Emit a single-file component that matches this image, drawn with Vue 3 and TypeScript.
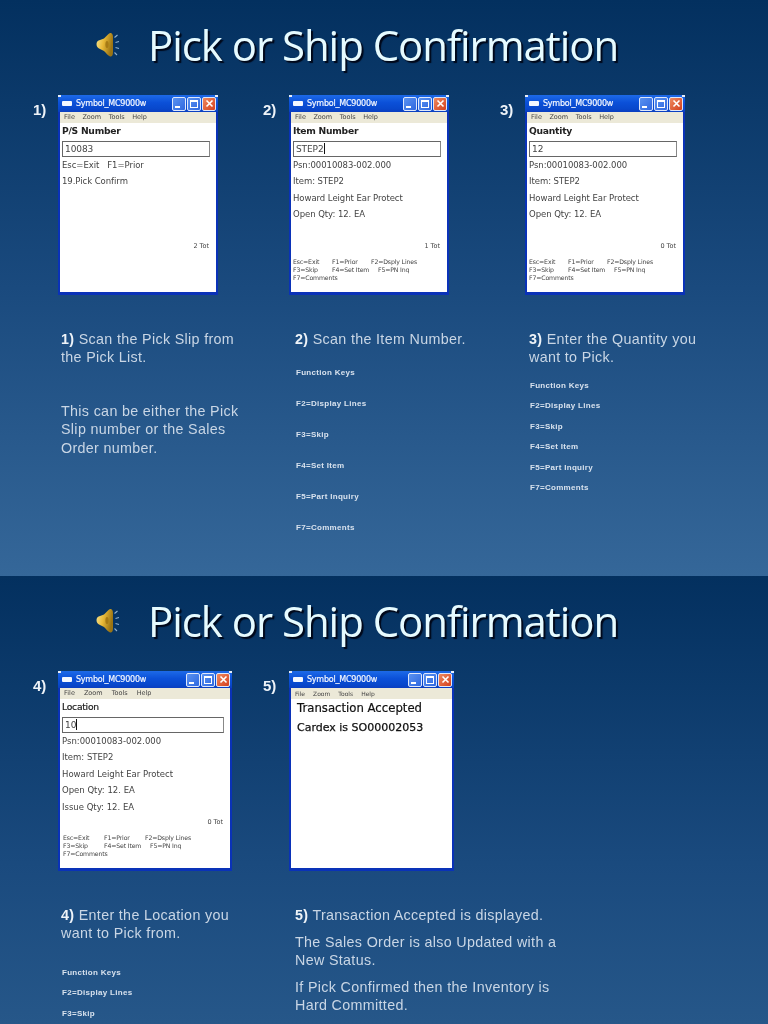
<script setup lang="ts">
interface Win {
  cls: string
  heading: string
  input: string
  cursor?: boolean
  lines: string[]
  tot: string
  foot?: boolean
}
interface Note {
  num: string
  first: string
  paras: string[]
  keys?: string[]
  keysCls?: string
}
interface Col {
  label: string
  win: Win
  note: Note
}
const allKeys = ['Function Keys', 'F2=Display Lines', 'F3=Skip', 'F4=Set Item', 'F5=Part Inquiry', 'F7=Comments']
const det = ['Psn:00010083-002.000', 'Item: STEP2', 'Howard Leight Ear Protect', 'Open Qty: 12. EA']
const slides: { cols: Col[] }[] = [
  {
    cols: [
      {
        label: '1)',
        win: { cls: 'w160', heading: 'P/S Number', input: '10083', lines: ['Esc=Exit   F1=Prior', '19.Pick Confirm'], tot: '2 Tot' },
        note: { num: '1)', first: ' Scan the Pick Slip from the Pick List.', paras: ['This can be either the Pick Slip number or the Sales Order number.'] },
      },
      {
        label: '2)',
        win: { cls: 'w160', heading: 'Item Number', input: 'STEP2', cursor: true, lines: det, tot: '1 Tot', foot: true },
        note: { num: '2)', first: ' Scan the Item Number.', paras: [], keys: allKeys, keysCls: 'wide' },
      },
      {
        label: '3)',
        win: { cls: 'w160', heading: 'Quantity', input: '12', lines: det, tot: '0 Tot', foot: true },
        note: { num: '3)', first: ' Enter the Quantity you want to Pick.', paras: [], keys: allKeys, keysCls: 'tight' },
      },
    ],
  },
  {
    cols: [
      {
        label: '4)',
        win: { cls: 'w174', heading: 'Location', input: '10', cursor: true, lines: [...det, 'Issue Qty: 12. EA'], tot: '0 Tot', foot: true },
        note: { num: '4)', first: ' Enter the Location you want to Pick from.', paras: [], keys: allKeys, keysCls: 'tight low' },
      },
      {
        label: '5)',
        win: { cls: 'w165 big', heading: 'Transaction Accepted', input: '', lines: ['Cardex is SO00002053'], tot: '' },
        note: {
          num: '5)',
          first: ' Transaction Accepted is displayed.',
          paras: ['The Sales Order is also Updated with a New Status.', 'If Pick Confirmed then the Inventory is Hard Committed.'],
        },
      },
    ],
  },
]
</script>

<template>
  <div class="page">
    <section v-for="(s, si) in slides" :key="si" class="slide">
      <header class="head">
        <svg class="speaker" width="24" height="26" viewBox="0 0 24 26">
          <defs>
            <linearGradient id="gold" x1="0" y1="0" x2="1" y2="0.3">
              <stop offset="0" stop-color="#f8e690" />
              <stop offset="0.5" stop-color="#e8b836" />
              <stop offset="1" stop-color="#9a7414" />
            </linearGradient>
          </defs>
          <path d="M0.500 12 C0.500 9.500 2 8.500 4 8 L8 6.500 C10 4.500 12 2 14 1 C15.500 0.500 17 2 17 5 L17 20 C17 24 15.500 25 14 24.500 C12 23.500 10 21 8 19 L4 17 C2 16 0.500 15 0.500 12 Z" fill="url(#gold)" />
          <ellipse cx="11" cy="12.500" rx="1.600" ry="3.500" fill="#a67a14" />
          <path d="M18.500 5.500 L21.500 3 M19.500 10.500 L23 9.500 M19.500 15.500 L23 16.500 M18.500 20.500 L21 23" stroke="#8fb0d0" stroke-width="1.100" fill="none" />
        </svg>
        <h1 class="title">Pick or Ship Confirmation</h1>
      </header>
      <div class="cols">
        <div v-for="c in s.cols" :key="c.label" class="col">
          <div class="shot">
            <span class="label">{{ c.label }}</span>
            <div class="win" :class="c.win.cls">
              <i class="corner left"></i><i class="corner right"></i>
              <div class="bar">
                <span class="sysicon"></span>
                <span class="wtitle">Symbol_MC9000w</span>
                <span class="btn"><b class="min"></b></span>
                <span class="btn"><b class="max"></b></span>
                <span class="btn close">
                  <svg width="11" height="11" viewBox="0 0 11 11"><path d="M2.500 2.500 L8.500 8.500 M8.500 2.500 L2.500 8.500" stroke="#fff" stroke-width="1.600" /></svg>
                </span>
              </div>
              <div class="menu"><span>File</span><span>Zoom</span><span>Tools</span><span>Help</span></div>
              <div class="body">
                <div class="upper">
                  <div class="heading">{{ c.win.heading }}</div>
                  <div v-if="c.win.input" class="input">{{ c.win.input }}<i v-if="c.win.cursor" class="cursor"></i></div>
                  <div v-for="l in c.win.lines" :key="l" class="line">{{ l }}</div>
                </div>
                <div v-if="c.win.tot" class="tot">{{ c.win.tot }}</div>
                <div v-if="c.win.tot" class="foot">
                  <template v-if="c.win.foot">
                    <div class="frow"><span>Esc=Exit</span><span>F1=Prior</span><span>F2=Dsply Lines</span></div>
                    <div class="frow second"><span>F3=Skip</span><span>F4=Set Item</span><span>F5=PN Inq</span></div>
                    <div class="frow"><span>F7=Comments</span></div>
                  </template>
                </div>
              </div>
            </div>
          </div>
          <div class="note">
            <p class="para first"><strong>{{ c.note.num }}</strong>{{ c.note.first }}</p>
            <p v-for="p in c.note.paras" :key="p" class="para">{{ p }}</p>
            <ul v-if="c.note.keys" class="keys" :class="c.note.keysCls">
              <li v-for="k in c.note.keys" :key="k">{{ k }}</li>
            </ul>
          </div>
        </div>
      </div>
    </section>
  </div>
</template>

<style>
html, body { margin: 0; overflow: hidden; background: #2f6094; }
</style>

<style scoped>
.page { height: 1024px; overflow: hidden; font-family: "Liberation Sans", Arial, sans-serif; }
.slide {
  height: 576px;
  box-sizing: border-box;
  overflow: hidden;
  background: linear-gradient(180deg, #03305f 0%, #1a4a7e 50%, #356799 100%);
}
.slide + .slide { height: 448px; background: linear-gradient(180deg, #03305f 0%, #1a4a7e 64%, #265789 100%); }
.head { height: 95px; display: flex; align-items: center; padding: 0 0 5px 96px; box-sizing: border-box; }
.speaker { flex: none; margin-right: 28px; margin-top: -1px; }
.title {
  margin: 0;
  font-family: "Open Sans", "Noto Sans", sans-serif;
  font-weight: 400;
  font-size: 42px;
  line-height: 50px;
  letter-spacing: -1.05px;
  white-space: nowrap;
  color: #e6fbff;
  text-shadow: 2px 2px 1px #00081a;
  filter: blur(0.3px);
}
.cols { display: grid; grid-template-columns: 230px 237px 1fr; padding-left: 33px; }
.slide + .slide .cols { grid-template-columns: 230px 1fr; }
.shot { display: flex; align-items: flex-start; }
.label {
  width: 25px;
  flex: none;
  font-weight: 700;
  font-size: 15px;
  line-height: 30px;
  color: #eef3f8;
  filter: blur(0.3px);
}
.col:nth-child(2) .label { width: 26px; }
.win {
  position: relative;
  height: 200px;
  box-sizing: border-box;
  border: 2px solid #0a32b8;
  border-top: 0;
  border-bottom-width: 3px;
  border-radius: 2px 2px 0 0;
  background: #fff;
  display: flex;
  flex-direction: column;
  filter: blur(0.4px);
  color: #444;
  overflow: visible;
}
.w160 { width: 160px; }
.w174 { width: 174px; }
.w165 { width: 165px; }
.corner { position: absolute; top: 0; width: 3px; height: 2px; background: #e8eef8; z-index: 1; }
.corner.left { left: -2px; }
.corner.right { right: -2px; }
.bar {
  margin: 0 -2px;
  height: 17px;
  flex: none;
  display: flex;
  align-items: center;
  gap: 1px;
  padding: 0 2px 0 4px;
  background: linear-gradient(180deg, #1d6ae8 0%, #0b50d8 45%, #0848cc 80%, #0a3ec0 100%);
}
.sysicon { width: 10px; height: 5px; background: #f4f8ff; border-radius: 1px; margin-right: 3px; flex: none; }
.wtitle {
  flex: 1;
  font-size: 8px;
  font-family: "DejaVu Sans", sans-serif;
  font-weight: 400;
  letter-spacing: -0.22px;
  -webkit-text-stroke: 0.2px #f2f6ff;
  color: #f2f6ff;
  white-space: nowrap;
}
.btn {
  width: 14px;
  height: 14px;
  flex: none;
  box-sizing: border-box;
  border: 1px solid #dfe8fb;
  border-radius: 2px;
  background: linear-gradient(135deg, #5a92f0, #2f68e0);
  position: relative;
  display: flex;
  align-items: center;
  justify-content: center;
}
.btn.close { background: linear-gradient(135deg, #ee8a60, #d4401e); }
.btn .min { position: absolute; left: 2px; bottom: 2px; width: 5px; height: 2px; background: #fff; }
.btn .max { width: 8px; height: 8px; box-sizing: border-box; border: 1px solid #fff; border-top-width: 2px; }
.menu {
  height: 11px;
  flex: none;
  display: flex;
  gap: 7.500px;
  padding: 0 0 0 4px;
  background: #ece9d8;
  font-size: 6.500px;
  line-height: 11px;
  font-family: "DejaVu Sans", sans-serif;
  color: #444;
}
.body { flex: 1; display: flex; flex-direction: column; padding: 0 3px 0 2px; min-height: 0; }
.upper { flex: 1; min-height: 0; }
.heading {
  height: 18px;
  line-height: 15px;
  font-size: 9.200px;
  font-weight: 700;
  font-family: "DejaVu Sans", sans-serif;
  letter-spacing: -0.25px;
  color: #222;
  white-space: nowrap;
}
.input {
  height: 16px;
  box-sizing: border-box;
  margin: 0 3px 0 0;
  border: 1px solid #666;
  border-right-color: #888;
  font-size: 9px;
  line-height: 14px;
  padding-left: 2px;
  font-family: "DejaVu Sans", sans-serif;
  letter-spacing: -0.1px;
}
.cursor { display: inline-block; width: 1px; height: 11px; background: #111; vertical-align: -2px; }
.line {
  height: 16.400px;
  line-height: 17px;
  font-size: 8.500px;
  font-family: "DejaVu Sans", sans-serif;
  letter-spacing: -0.05px;
  white-space: pre;
}
.tot { height: 9px; text-align: right; font-size: 6.500px; line-height: 10px; font-family: "DejaVu Sans", sans-serif; padding-right: 4px; }
.foot { height: 42px; padding-top: 8px; box-sizing: border-box; font-size: 6.200px; line-height: 8.200px; font-family: "DejaVu Sans", sans-serif; letter-spacing: -0.15px; }
.frow { display: flex; white-space: nowrap; }
.frow span { width: 39px; }
.frow.second span:nth-child(2) { width: 46px; }
.frow span:last-child { width: auto; }
.w174 .menu { gap: 9px; }
.w174 .frow span { width: 41px; }
.w174 .frow.second span:nth-child(2) { width: 46px; }
.w174 .frow span:last-child { width: auto; }
.w174 .foot { padding-left: 1px; }
.w174 .line { font-size: 8.500px; letter-spacing: 0; }
.w174 .heading { font-weight: 400; -webkit-text-stroke: 0.2px #222; }
.big .menu { font-size: 6px; gap: 8px; }
.big .heading {
  font-size: 11.700px;
  height: 19px;
  line-height: 19px;
  padding-left: 4px;
  letter-spacing: 0;
  font-weight: 400;
  -webkit-text-stroke: 0.2px #111;
  color: #111;
}
.big .line {
  font-size: 11px;
  height: 19px;
  line-height: 19px;
  padding-left: 4px;
  letter-spacing: 0;
  -webkit-text-stroke: 0.25px #111;
  color: #111;
}
.note { margin-top: 35px; padding-left: 28px; padding-right: 16px; color: #c9d6e5; filter: blur(0.25px); }
.col:nth-child(2) .note { padding-left: 32px; max-width: 270px; }
.col:nth-child(3) .note { padding-left: 29px; padding-right: 60px; }
.para { margin: 8.500px 0 0; font-size: 14.300px; line-height: 18.300px; letter-spacing: 0.33px; }
.para.first { margin-top: 0; }
.para strong { color: #eef3f8; }
.col:first-child .para + .para { margin-top: 35.500px; }
.keys { list-style: none; margin: 9px 0 0; padding: 0 0 0 1px; font-size: 8px; font-weight: 700; letter-spacing: 0.3px; color: #d8e2ee; }
.keys.wide li { line-height: 31px; }
.keys.tight li { line-height: 20.500px; }
.keys.low { margin-top: 20px; }
</style>
